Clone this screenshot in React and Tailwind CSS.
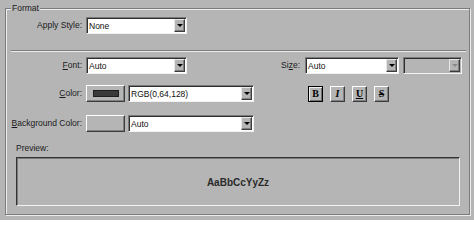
import React from 'react';

const BG = 'bg-[#b5b5b5]';

function Arrow({ disabled }) {
  return (
    <div className="w-[11px] h-[13px] mt-[1px] mr-[1px] bg-[#b5b5b5] border border-t-[#e8e8e8] border-l-[#e8e8e8] border-b-[#3c3c3c] border-r-[#3c3c3c] shadow-[inset_-1px_-1px_0_#808080] flex items-center justify-center">
      <div
        className={
          'w-0 h-0 border-l-[3px] border-r-[3px] border-t-[3px] border-l-transparent border-r-transparent ' +
          (disabled ? 'border-t-[#8a8a8a]' : 'border-t-black')
        }
      />
    </div>
  );
}

function Select({ value, width, disabled }) {
  return (
    <div
      className={
        'flex h-[17px] shrink-0 border border-t-[#7a7a7a] border-l-[#7a7a7a] border-b-[#f2f2f2] border-r-[#f2f2f2] shadow-[inset_1px_1px_0_#2e2e2e] ' +
        (disabled ? 'bg-[#b5b5b5]' : 'bg-white')
      }
      style={{ width }}
    >
      <span className="flex-1 pl-[2px] pt-[1px] leading-[14px] text-[#111]">{value}</span>
      <Arrow disabled={disabled} />
    </div>
  );
}

function Label({ children, className = '' }) {
  return <span className={'text-right text-[#1a1a1a] leading-[17px] ' + className}>{children}</span>;
}

function StyleBtn({ children, active, className = '' }) {
  return (
    <div
      className={
        'w-[15px] h-[16px] flex items-center justify-center font-["Liberation_Serif",serif] font-bold text-[10px] leading-none text-black border ' +
        (active
          ? 'border-black shadow-[inset_1px_1px_0_#f0f0f0,inset_-1px_-1px_0_#707070]'
          : 'border-t-white border-l-white border-b-[#3c3c3c] border-r-[#3c3c3c] shadow-[inset_-1px_-1px_0_#808080]')
      }
    >
      <span className={className}>{children}</span>
    </div>
  );
}

function ColorBtn({ swatch }) {
  return (
    <div className="w-[39px] h-[17px] shrink-0 flex items-center justify-center border border-t-white border-l-white border-b-[#3c3c3c] border-r-[#3c3c3c] shadow-[inset_-1px_-1px_0_#808080]">
      {swatch && <div className="w-[26px] h-[7px] bg-[#3a3a3a] border border-[#1e1e1e]" />}
    </div>
  );
}

export default function App() {
  return (
    <div className={`w-[474px] h-[220px] ${BG} pt-[8px] pl-[5px] font-["Liberation_Sans",Arial,sans-serif] text-[8.5px] overflow-hidden`}>
      {/* Format group */}
      <div className="relative w-[465px] h-[207px] border border-[#7c7c7c] shadow-[1px_1px_0_#ececec,inset_1px_1px_0_#ececec]">
        <span className={`absolute -top-[6px] left-[5px] px-[1px] ${BG} text-[#1a1a1a] leading-[10px]`}>Format</span>

        {/* Apply style */}
        <div className="flex items-center mt-[8px]">
          <Label className="w-[76px]">Apply Style:</Label>
          <div className="ml-[4px]">
            <Select value="None" width={101} />
          </div>
        </div>

        {/* separator */}
        <div className="mt-[16px] ml-[5px] mr-[3px] h-[2px] border-t border-t-[#7c7c7c] border-b border-b-[#ececec]" />

        {/* Font / Size */}
        <div className="flex items-center mt-[5px]">
          <Label className="w-[76px]"><u>F</u>ont:</Label>
          <div className="ml-[4px]">
            <Select value="Auto" width={101} />
          </div>
          <Label className="w-[113px]">Si<u>z</u>e:</Label>
          <div className="ml-[5px] flex gap-[4px]">
            <Select value="Auto" width={94} />
            <Select value="" width={59} disabled />
          </div>
        </div>

        {/* Color */}
        <div className="flex items-center mt-[11px]">
          <Label className="w-[76px]"><u>C</u>olor:</Label>
          <div className="ml-[4px] flex gap-[3px]">
            <ColorBtn swatch />
            <Select value="RGB(0,64,128)" width={126} />
          </div>
          <div className="ml-[54px] flex gap-[7px]">
            <StyleBtn active>B</StyleBtn>
            <StyleBtn className="italic">I</StyleBtn>
            <StyleBtn className="underline">U</StyleBtn>
            <StyleBtn className="line-through">S</StyleBtn>
          </div>
        </div>

        {/* Background color */}
        <div className="flex items-center mt-[13px]">
          <Label className="w-[76px]"><u>B</u>ackground Color:</Label>
          <div className="ml-[4px] flex gap-[3px]">
            <ColorBtn />
            <Select value="Auto" width={126} />
          </div>
        </div>

        {/* Preview */}
        <div className="mt-[12px] pl-[10px] text-[#1a1a1a] leading-[9px]">Preview:</div>
        <div className="mt-[4px] ml-[10px] w-[444px] h-[49px] border border-t-[#333] border-l-[#333] border-b-[#f2f2f2] border-r-[#f2f2f2] shadow-[inset_1px_1px_0_#7a7a7a] flex items-center justify-center">
          <span className="font-bold text-[10px] text-[#2a2a2a] mt-[2px]">AaBbCcYyZz</span>
        </div>
      </div>
    </div>
  );
}
